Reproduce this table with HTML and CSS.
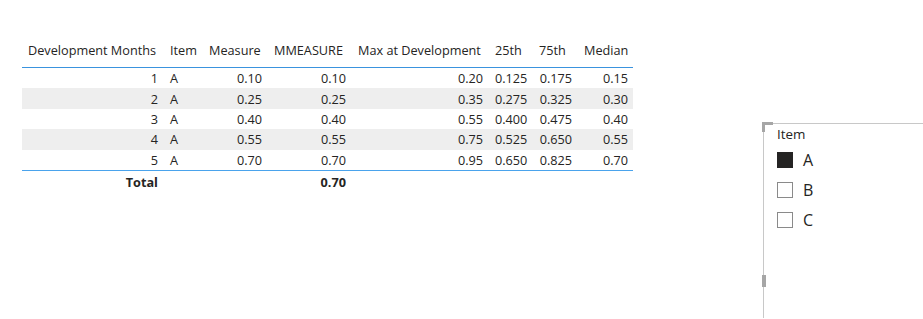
FILE: index.html
```html
<!DOCTYPE html>
<html>
<head>
<meta charset="utf-8">
<link rel="stylesheet" href="styles.css">
</head>
<body>
<div class="canvas">
  <div class="table-visual">
    <table class="grid">
      <colgroup>
        <col class="c1"><col class="c2"><col class="c3"><col class="c4"><col class="c5"><col class="c6"><col class="c7"><col class="c8">
      </colgroup>
      <thead>
        <tr>
          <th class="first">Development Months</th>
          <th>Item</th>
          <th>Measure</th>
          <th>MMEASURE</th>
          <th>Max at Development</th>
          <th>25th</th>
          <th>75th</th>
          <th>Median</th>
        </tr>
      </thead>
      <tbody>
        <tr><td class="num first">1</td><td>A</td><td class="num">0.10</td><td class="num">0.10</td><td class="num">0.20</td><td class="num">0.125</td><td class="num">0.175</td><td class="num">0.15</td></tr>
        <tr class="band"><td class="num first">2</td><td>A</td><td class="num">0.25</td><td class="num">0.25</td><td class="num">0.35</td><td class="num">0.275</td><td class="num">0.325</td><td class="num">0.30</td></tr>
        <tr><td class="num first">3</td><td>A</td><td class="num">0.40</td><td class="num">0.40</td><td class="num">0.55</td><td class="num">0.400</td><td class="num">0.475</td><td class="num">0.40</td></tr>
        <tr class="band"><td class="num first">4</td><td>A</td><td class="num">0.55</td><td class="num">0.55</td><td class="num">0.75</td><td class="num">0.525</td><td class="num">0.650</td><td class="num">0.55</td></tr>
        <tr class="last"><td class="num first">5</td><td>A</td><td class="num">0.70</td><td class="num">0.70</td><td class="num">0.95</td><td class="num">0.650</td><td class="num">0.825</td><td class="num">0.70</td></tr>
      </tbody>
      <tfoot>
        <tr><td class="num first">Total</td><td></td><td></td><td class="num">0.70</td><td></td><td></td><td></td><td></td></tr>
      </tfoot>
    </table>
  </div>
  <div class="slicer">
    <div class="slicer-title">Item</div>
    <ul class="slicer-list">
      <li class="slicer-item"><span class="box checked"></span><span class="label">A</span></li>
      <li class="slicer-item"><span class="box"></span><span class="label">B</span></li>
      <li class="slicer-item"><span class="box"></span><span class="label">C</span></li>
    </ul>
  </div>
</div>
</body>
</html>
```

FILE: styles.css
```css
html, body {
  margin: 0;
  padding: 0;
  background: #ffffff;
}

body {
  font-family: "Open Sans", "Segoe UI", sans-serif;
  color: #252423;
}

.canvas {
  display: flex;
  width: 923px;
  height: 319px;
  overflow: hidden;
}

.table-visual {
  padding-left: 22px;
  padding-top: 30px;
}

.grid {
  border-collapse: separate;
  border-spacing: 0;
  table-layout: fixed;
  width: 611px;
  font-size: 12.7px;
  line-height: 16px;
  color: #252423;
}

.c1 { width: 141px; }
.c2 { width: 39px; }
.c3 { width: 65px; }
.c4 { width: 84px; }
.c5 { width: 137px; }
.c6 { width: 44px; }
.c7 { width: 45px; }
.c8 { width: 56px; }

.grid th,
.grid td {
  padding: 0 5px 0 7px;
  white-space: nowrap;
  overflow: hidden;
}

.grid th.first,
.grid td.first {
  padding-left: 6px;
}

.grid th {
  font-weight: normal;
  text-align: left;
  vertical-align: bottom;
  padding-top: 12px;
  padding-bottom: 9px;
  border-bottom: 1px solid #3a93de;
}

.grid tbody td {
  height: 20.4px;
  vertical-align: middle;
}

.grid tbody tr.band td {
  background: #eeeeee;
}

.grid tbody tr.last td {
  border-bottom: 1px solid #4aa3ec;
}

.grid .num {
  text-align: right;
}

.grid tfoot td {
  height: 22px;
  font-weight: bold;
  vertical-align: middle;
}

/* slicer */
.slicer {
  position: relative;
  margin-left: auto;
  margin-top: 123px;
  width: 146px;
  height: 192px;
  border-top: 1px solid #c8c8c8;
  border-left: 1px solid #c8c8c8;
  padding: 2px 0 0 13px;
  box-sizing: content-box;
}

.slicer::before {
  content: "";
  position: absolute;
  left: -2px;
  top: -2px;
  width: 8px;
  height: 7px;
  border-top: 3px solid #a6a6a6;
  border-left: 3px solid #a6a6a6;
}

.slicer::after {
  content: "";
  position: absolute;
  left: -2px;
  top: 151px;
  width: 4px;
  height: 12px;
  background: #a6a6a6;
}

.slicer-title {
  font-size: 13.4px;
  line-height: 16px;
  color: #252423;
}

.slicer-list {
  list-style: none;
  margin: 3px 0 0 0;
  padding: 0;
}

.slicer-item {
  display: flex;
  align-items: center;
  height: 30px;
  gap: 10px;
}

.box {
  width: 14px;
  height: 14px;
  border: 1px solid #8a8a8a;
  background: #ffffff;
  flex: none;
}

.box.checked {
  background: #252423;
  border-color: #252423;
}

.label {
  font-size: 16px;
  line-height: 20px;
  color: #252423;
}
```
